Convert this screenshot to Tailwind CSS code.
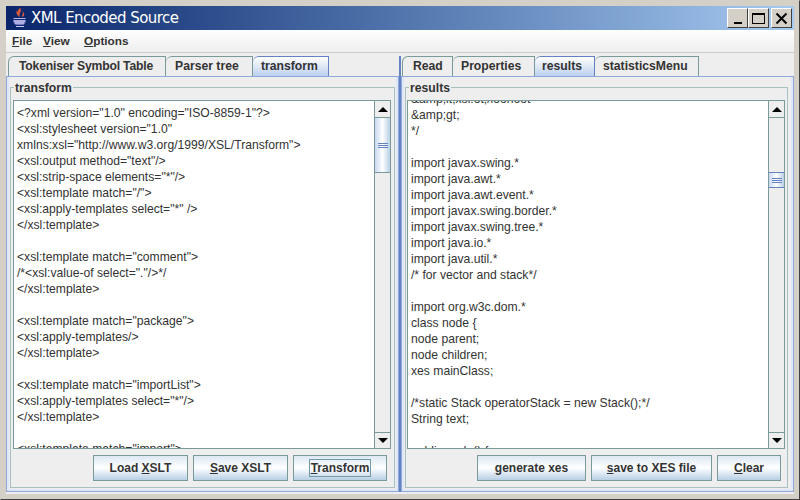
<!DOCTYPE html>
<html lang="en">
<head>
    <meta charset="UTF-8">
    <title>XML Encoded Source</title>
    <script src="https://cdn.jsdelivr.net/npm/@tailwindcss/browser@4"></script>
</head>
<body class="w-[800px] h-[500px] overflow-hidden bg-[#d4d0c8] font-['Liberation_Sans',sans-serif] text-[12.15px] text-[#333333]">
    <div class="w-[800px] h-[500px] flex flex-col border border-b-[#404040] border-r-[#404040] border-t-[#d4d0c8] border-l-[#d4d0c8] p-[5px]">
        <!-- title bar -->
        <div class="h-[24px] shrink-0 flex items-center bg-gradient-to-r from-[#0a246a] to-[#a6caf0] pl-[3px] pr-[2px]">
            <svg width="22" height="22" viewBox="0 0 22 22">
                <path d="M11 1c3 3-2 5 0 9 -4-2-4-5-3-7 0 2 1 2 1 1 0-1 1-2 2-3z M13 4c2 2 0 4 0 6 3-1 3-4 0-6z" fill="#e0583a"/>
                <path d="M4 11h13l-1 1H5z" fill="#b8b8e8"/>
                <path d="M4 13h13c0 3-2 5-4 5H8c-2 0-4-2-4-5z" fill="#7d7dc8"/>
                <path d="M5 14h11M6 16h9" stroke="#e0e0ff" stroke-width="1"/>
                <path d="M7 19h8v1H7z" fill="#c8c8f0"/>
            </svg>
            <span class="text-[15px] leading-[20px] text-white font-['DejaVu_Sans',sans-serif] tracking-[-0.55px]">XML Encoded Source</span>
            <div class="ml-auto flex">
                <button class="w-[21px] h-[20px] bg-[#d4d0c8] border border-t-white border-l-white border-r-[#404040] border-b-[#404040] flex items-end justify-center pb-[3px]">
                    <span class="block w-[8px] h-[2px] bg-black"></span>
                </button>
                <button class="w-[21px] h-[20px] bg-[#d4d0c8] border border-t-white border-l-white border-r-[#404040] border-b-[#404040] flex items-center justify-center mr-[2px]">
                    <span class="block w-[13px] h-[11px] border border-black border-t-2"></span>
                </button>
                <button class="w-[21px] h-[20px] bg-[#d4d0c8] border border-t-white border-l-white border-r-[#404040] border-b-[#404040] flex items-center justify-center">
                    <svg width="13" height="13" viewBox="0 0 13 13"><path d="M1.5 1.5l10 10M11.5 1.5l-10 10" stroke="black" stroke-width="2"/></svg>
                </button>
            </div>
        </div>

        <!-- menu bar -->
        <div class="h-[23px] shrink-0 flex items-center pl-[6px] pt-[1px] bg-gradient-to-b from-white to-[#eeeeee] border-b border-[#cccccc] font-bold text-[11.8px]">
            <span class="w-[31px]"><u>F</u>ile</span>
            <span class="w-[41px]"><u>V</u>iew</span>
            <span><u>O</u>ptions</span>
        </div>

        <div class="flex flex-1 pt-[3px] pb-[2px] bg-[#eeeeee]">
            <!-- left side -->
            <div class="w-[393px] shrink-0 flex flex-col">
                <div class="h-[20px] flex items-end pl-[2px] font-bold text-[12.2px] whitespace-nowrap">
                    <div class="h-[20px] w-[158px] pl-[10px] leading-[19px] tracking-[-0.2px] bg-[#eeeeee] border border-b-0 border-[#7a9a9a] rounded-tl-[6px] shrink-0">Tokeniser Symbol Table</div>
                    <div class="h-[20px] w-[87px] pl-[9px] leading-[19px] bg-[#eeeeee] border border-l-0 border-b-0 border-[#7a9a9a] rounded-tl-[6px] shrink-0">Parser tree</div>
                    <div class="h-[20px] w-[76px] pl-[8px] leading-[19px] bg-gradient-to-b from-[#ffffff] to-[#bcd0ee] border border-l-0 border-b-0 border-[#6382bf] rounded-tl-[6px] shrink-0">transform</div>
                </div>
                <div class="flex-1 flex flex-col border border-[#8fa8dc]">
                    <div class="flex-1 flex flex-col border-x-2 border-b-2 border-[#dfe6f8] pt-[10px] pl-[1px] pr-[1px] pb-[1px]">
                        <div class="relative flex-1 border border-[#a9c0c0] pt-[12px] pl-[2px] pr-[3px] flex flex-col">
                            <span class="absolute left-[3px] top-[-7px] bg-[#eeeeee] px-[1px] font-bold text-[12.2px] leading-[15px]">transform</span>
                            <div class="flex h-[349px] shrink-0 border border-[#7a9a9a] bg-white">
                                <div class="flex-1 overflow-hidden pl-[3px] pt-[4px] leading-[16px] whitespace-pre">&lt;?xml version="1.0" encoding="ISO-8859-1"?&gt;
&lt;xsl:stylesheet version="1.0"
xmlns:xsl="http://www.w3.org/1999/XSL/Transform"&gt;
&lt;xsl:output method="text"/&gt;
&lt;xsl:strip-space elements="*"/&gt;
&lt;xsl:template match="/"&gt;
&lt;xsl:apply-templates select="*" /&gt;
&lt;/xsl:template&gt;

&lt;xsl:template match="comment"&gt;
/*&lt;xsl:value-of select="."/&gt;*/
&lt;/xsl:template&gt;

&lt;xsl:template match="package"&gt;
&lt;xsl:apply-templates/&gt;
&lt;/xsl:template&gt;

&lt;xsl:template match="importList"&gt;
&lt;xsl:apply-templates select="*"/&gt;
&lt;/xsl:template&gt;

&lt;xsl:template match="import"&gt;</div>
                                <div class="w-[16px] shrink-0 flex flex-col bg-[#eeeeee] border-l border-[#7a9a9a]">
                                    <div class="h-[17px] flex items-center justify-center border-b border-[#7a9a9a]">
                                        <span class="block w-0 h-0 border-x-[5px] border-x-transparent border-b-[5px] border-b-black"></span>
                                    </div>
                                    <div class="h-[55px] flex items-center justify-center border-b border-[#7a9a9a] bg-gradient-to-r from-[#c8d8f0] via-white to-[#b8cfe5]">
                                        <span class="block w-[10px] h-[5px] border-y border-[#6382bf]"><span class="block h-[1px] mt-[1px] bg-[#6382bf]"></span></span>
                                    </div>
                                    <div class="flex-1"></div>
                                    <div class="h-[16px] flex items-center justify-center border-t border-[#7a9a9a]">
                                        <span class="block w-0 h-0 border-x-[5px] border-x-transparent border-t-[5px] border-t-black"></span>
                                    </div>
                                </div>
                            </div>
                            <div class="flex justify-end gap-[5px] pt-[6px] pr-[4px] font-bold text-[12px]">
                                <button class="w-[95px] h-[26px] border border-[#7a9a9a] bg-gradient-to-b from-[#dde8f3] via-white to-[#b8cfe5]">Load <u>X</u>SLT</button>
                                <button class="w-[95px] h-[26px] border border-[#7a9a9a] bg-gradient-to-b from-[#dde8f3] via-white to-[#b8cfe5]"><u>S</u>ave XSLT</button>
                                <button class="w-[94px] h-[26px] border border-[#7a9a9a] bg-gradient-to-b from-[#dde8f3] via-white to-[#b8cfe5] flex items-center justify-center"><span class="border border-[#6f9aa8] leading-[16px] px-[1px]"><u>T</u>ransform</span></button>
                            </div>
                        </div>
                    </div>
                </div>
            </div>

            <!-- divider -->
            <div class="w-[2px] shrink-0 bg-[#6382bf]"></div>

            <!-- right side -->
            <div class="w-[393px] shrink-0 flex flex-col">
                <div class="h-[20px] flex items-end pl-[1px] font-bold text-[12.2px] whitespace-nowrap">
                    <div class="h-[20px] w-[51px] pl-[10px] leading-[19px] border border-b-0 border-[#7a9a9a] rounded-tl-[6px] shrink-0">Read</div>
                    <div class="h-[20px] w-[82px] pl-[8px] leading-[19px] border border-l-0 border-b-0 border-[#7a9a9a] rounded-tl-[6px] shrink-0">Properties</div>
                    <div class="h-[20px] w-[60px] pl-[7px] leading-[19px] bg-gradient-to-b from-[#ffffff] to-[#bcd0ee] border border-l-0 border-b-0 border-[#6382bf] rounded-tl-[6px] shrink-0">results</div>
                    <div class="h-[20px] w-[104px] pl-[8px] leading-[19px] border border-l-0 border-b-0 border-[#7a9a9a] rounded-tl-[6px] shrink-0">statisticsMenu</div>
                </div>
                <div class="flex-1 flex flex-col border border-[#8fa8dc]">
                    <div class="flex-1 flex flex-col border-x-2 border-b-2 border-[#dfe6f8] pt-[10px] pl-[1px] pr-[3px] pb-[1px]">
                        <div class="relative flex-1 border border-[#a9c0c0] pt-[12px] pl-[1px] pr-[2px] flex flex-col">
                            <span class="absolute left-[3px] top-[-7px] bg-[#eeeeee] px-[1px] font-bold text-[12.2px] leading-[15px]">results</span>
                            <div class="flex h-[349px] shrink-0 border border-[#7a9a9a] bg-white">
                                <div class="flex-1 overflow-hidden pl-[3px] leading-[16px] whitespace-pre"><div class="-mt-[10px]">&amp;amp;lt;xsl:ot;/ioonoot
&amp;amp;gt;
*/

import javax.swing.*
import java.awt.*
import java.awt.event.*
import javax.swing.border.*
import javax.swing.tree.*
import java.io.*
import java.util.*
/* for vector and stack*/

import org.w3c.dom.*
class node {
node parent;
node children;
xes mainClass;

/*static Stack operatorStack = new Stack();*/
String text;

public node() {</div></div>
                                <div class="w-[16px] shrink-0 flex flex-col bg-[#eeeeee] border-l border-[#7a9a9a]">
                                    <div class="h-[17px] flex items-center justify-center border-b border-[#7a9a9a]">
                                        <span class="block w-0 h-0 border-x-[5px] border-x-transparent border-b-[5px] border-b-black"></span>
                                    </div>
                                    <div class="h-[54px]"></div>
                                    <div class="h-[16px] flex items-center justify-center border-y border-[#6382bf] bg-gradient-to-r from-[#c8d8f0] via-white to-[#b8cfe5]">
                                        <span class="block w-[10px] h-[5px] border-y border-[#6382bf]"><span class="block h-[1px] mt-[1px] bg-[#6382bf]"></span></span>
                                    </div>
                                    <div class="flex-1"></div>
                                    <div class="h-[16px] flex items-center justify-center border-t border-[#7a9a9a]">
                                        <span class="block w-0 h-0 border-x-[5px] border-x-transparent border-t-[5px] border-t-black"></span>
                                    </div>
                                </div>
                            </div>
                            <div class="flex justify-end gap-[5px] pt-[6px] pr-[4px] font-bold text-[12px]">
                                <button class="w-[109px] h-[26px] border border-[#7a9a9a] bg-gradient-to-b from-[#dde8f3] via-white to-[#b8cfe5]"><u>g</u>enerate xes</button>
                                <button class="w-[121px] h-[26px] border border-[#7a9a9a] bg-gradient-to-b from-[#dde8f3] via-white to-[#b8cfe5]"><u>s</u>ave to XES file</button>
                                <button class="w-[64px] h-[26px] border border-[#7a9a9a] bg-gradient-to-b from-[#dde8f3] via-white to-[#b8cfe5]"><u>C</u>lear</button>
                            </div>
                        </div>
                    </div>
                </div>
            </div>
        </div>
    </div>
</body>
</html>
